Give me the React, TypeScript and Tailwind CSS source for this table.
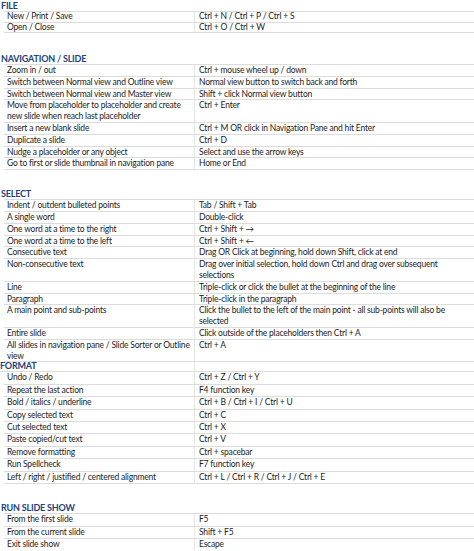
import React from "react";

type Row = [string, string] | { h: string };

type Section = { title: string; mt: string; lead: string; rows: Row[] };

const sections: Section[] = [
  {
    title: "FILE",
    mt: "",
    lead: "leading-[9.5px]",
    rows: [
      ["New / Print / Save", "Ctrl + N / Ctrl + P / Ctrl + S"],
      ["Open / Close", "Ctrl + O / Ctrl + W"],
    ],
  },
  {
    title: "NAVIGATION / SLIDE",
    mt: "mt-[20px]",
    lead: "leading-[10.8px]",
    rows: [
      ["Zoom in / out", "Ctrl + mouse wheel up / down"],
      ["Switch between Normal view and Outline view", "Normal view button to switch back and forth"],
      ["Switch between Normal view and Master view", "Shift + click Normal view button"],
      ["Move from placeholder to placeholder and create new slide when reach last placeholder", "Ctrl + Enter"],
      ["Insert a new blank slide", "Ctrl + M OR click in Navigation Pane and hit Enter"],
      ["Duplicate a slide", "Ctrl + D"],
      ["Nudge a placeholder or any object", "Select and use the arrow keys"],
      ["Go to first or slide thumbnail in navigation pane", "Home or End"],
    ],
  },
  {
    title: "SELECT",
    mt: "mt-[18px]",
    lead: "leading-[10.8px]",
    rows: [
      ["Indent / outdent bulleted points", "Tab / Shift + Tab"],
      ["A single word", "Double-click"],
      ["One word at a time to the right", "Ctrl + Shift + \u2192"],
      ["One word at a time to the left", "Ctrl + Shift + \u2190"],
      ["Consecutive text", "Drag OR Click at beginning, hold down Shift, click at end"],
      ["Non-consecutive text", "Drag over initial selection, hold down Ctrl and drag over subsequent selections"],
      ["Line", "Triple-click or click the bullet at the beginning of the line"],
      ["Paragraph", "Triple-click in the paragraph"],
      ["A main point and sub-points", "Click the bullet to the left of the main point - all sub-points will also be selected"],
      ["Entire slide", "Click outside of the placeholders then Ctrl + A"],
      ["All slides in navigation pane / Slide Sorter or Outline view", "Ctrl + A"],
      { h: "FORMAT" },
      ["Undo / Redo", "Ctrl + Z / Ctrl + Y"],
      ["Repeat the last action", "F4 function key"],
      ["Bold / italics / underline", "Ctrl + B / Ctrl + I / Ctrl + U"],
      ["Copy selected text", "Ctrl + C"],
      ["Cut selected text", "Ctrl + X"],
      ["Paste copied/cut text", "Ctrl + V"],
      ["Remove formatting", "Ctrl + spacebar"],
      ["Run Spellcheck", "F7 function key"],
      ["Left / right / justified / centered alignment", "Ctrl + L / Ctrl + R / Ctrl + J / Ctrl + E"],
    ],
  },
  {
    title: "RUN SLIDE SHOW",
    mt: "mt-[18px]",
    lead: "leading-[11.7px]",
    rows: [
      ["From the first slide", "F5"],
      ["From the current slide", "Shift + F5"],
      ["Exit slide show", "Escape"],
    ],
  },
];

function Header({ t }: { t: string }) {
  return (
    <div className="h-[11px] leading-[11px] pl-[1px] font-bold text-[#23427a] text-[9px] tracking-[-0.2px]">{t}</div>
  );
}

export default function App() {
  return (
    <div
      className="w-[474px] h-[551px] overflow-hidden bg-white text-[#1c1c1c] text-[8.5px] tracking-[-0.2px]"
      style={{ fontFamily: "Lato, 'Liberation Sans', sans-serif" }}
    >
      {sections.map((s, i) => {
        let afterFormat = false;
        return (
          <div key={i} className={s.mt}>
            <Header t={s.title} />
            <div className="ml-[4px] border-t border-[#dcdcdc]">
              {s.rows.map((r, j) => {
                if ("h" in r) {
                  afterFormat = true;
                  return (
                    <div key={j} className="flex border-b border-[#dcdcdc] -ml-[4px]">
                      <div className="w-[194px] leading-[8px] h-[9px] font-bold text-[9px] text-[#23427a] tracking-[-0.2px]">{r.h}</div>
                      <div className="flex-1 border-l border-[#e6e6e6]" />
                    </div>
                  );
                }
                const lead = afterFormat ? "leading-[11.4px]" : s.lead;
                return (
                  <div key={j} className={`flex border-b border-[#dcdcdc] ${lead}`}>
                    <div className="w-[190px] pl-[3px]">{r[0]}</div>
                    <div className="flex-1 border-l border-[#e6e6e6] pl-[4px] pr-[20px]">{r[1]}</div>
                  </div>
                );
              })}
            </div>
          </div>
        );
      })}
    </div>
  );
}
